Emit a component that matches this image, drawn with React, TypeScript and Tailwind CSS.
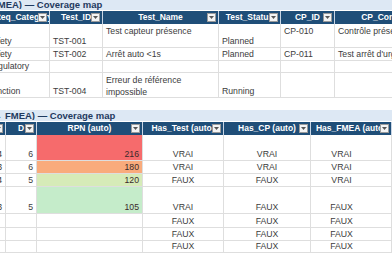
import React from "react";

const font = "font-['Liberation_Sans',Arial,sans-serif]";

function Drop() {
  return (
    <div className="absolute right-[2px] top-[2px] w-[9px] h-[9px] bg-[#f4f4f4] border border-[#9a9a9a] flex items-center justify-center">
      <svg width="5" height="3" viewBox="0 0 5 3">
        <path d="M0 0 L5 0 L2.5 3 Z" fill="#555" />
      </svg>
    </div>
  );
}

function H({ label, cls = "" }: { label: string; cls?: string }) {
  return (
    <div className={`relative h-full flex items-center justify-center overflow-hidden border-r border-[#c9d6e6] text-white font-bold text-[8.5px] whitespace-nowrap ${cls}`}>
      <span className="shrink-0">{label}</span>
      <Drop />
    </div>
  );
}

type Cell = { t?: React.ReactNode; a?: "l" | "r" | "c"; top?: boolean; bg?: string; cls?: string };

function C({ c }: { c: Cell }) {
  const align = c.a === "r" ? "justify-end pr-[3px]" : c.a === "c" ? "justify-center" : "justify-start pl-[3px]";
  return (
    <div
      className={`h-full flex ${c.top ? "items-start pt-[1px]" : "items-end pb-[0px]"} ${align} border-r border-b border-[#dedede] overflow-hidden whitespace-nowrap leading-[12px] ${c.bg ?? ""} ${c.cls ?? ""}`}
    >
      {c.t}
    </div>
  );
}

export default function App() {
  const topRows: { h: string; cells: Cell[] }[] = [
    {
      h: "h-[24px]",
      cells: [
        { t: "Safety" },
        { t: "TST-001" },
        { t: "Test capteur présence", top: true },
        { t: "Planned" },
        { t: "CP-010", top: true },
        { t: "Contrôle présence opérateur", top: true },
      ],
    },
    {
      h: "h-[13px]",
      cells: [
        { t: "Safety" },
        { t: "TST-002" },
        { t: "Arrêt auto <1s" },
        { t: "Planned" },
        { t: "CP-011" },
        { t: "Test arrêt d'urgence" },
      ],
    },
    { h: "h-[12px]", cells: [{ t: "Regulatory" }, {}, {}, {}, {}, {}] },
    {
      h: "h-[25px]",
      cells: [
        { t: "Function" },
        { t: "TST-004" },
        {
          t: (
            <span>
              Erreur de référence
              <br />
              impossible
            </span>
          ),
          top: true,
        },
        { t: "Running" },
        {},
        {},
      ],
    },
  ];

  const rpn = (v: string, bg: string): Cell => ({ t: v, a: "r", bg, cls: "text-[#3a2a2a]" });
  const b = (v: string): Cell => ({ t: v, a: "c" });
  const bf = (v: string): Cell => ({ t: v, a: "c", cls: "pr-[19px]" });

  const botRows: { h: string; cells: Cell[] }[] = [
    { h: "h-[26px]", cells: [{ t: "4", a: "r" }, { t: "6", a: "r" }, rpn("216", "bg-[#f66b6c]"), b("VRAI"), b("VRAI"), bf("VRAI")] },
    { h: "h-[13px]", cells: [{ t: "3", a: "r" }, { t: "6", a: "r" }, rpn("180", "bg-[#f9ab7c]"), b("VRAI"), b("VRAI"), bf("VRAI")] },
    { h: "h-[13px]", cells: [{ t: "4", a: "r" }, { t: "5", a: "r" }, rpn("120", "bg-[#d6ebb8]"), b("FAUX"), b("FAUX"), bf("VRAI")] },
    { h: "h-[27px]", cells: [{ t: "3", a: "r" }, { t: "5", a: "r" }, rpn("105", "bg-[#c5ecca]"), b("VRAI"), b("FAUX"), bf("FAUX")] },
    { h: "h-[14px]", cells: [{}, {}, {}, b("FAUX"), b("FAUX"), bf("FAUX")] },
    { h: "h-[13px]", cells: [{}, {}, {}, b("FAUX"), b("FAUX"), bf("FAUX")] },
    { h: "h-[12px]", cells: [{}, {}, {}, b("FAUX"), b("FAUX"), bf("FAUX")] },
  ];

  const topGrid = "grid grid-cols-[66px_53px_116px_62px_54px_100px]";
  const botGrid = "grid grid-cols-[30px_31px_106px_81px_87px_81px]";

  return (
    <div className={`w-[392px] h-[272px] overflow-hidden bg-white text-[8.7px] text-[#3c3c3c] ${font}`}>
      {/* top title */}
      <div className="h-[11px] bg-[#dde8f4] border-b border-white flex items-start text-[9.5px] font-bold text-[#1f3a5f] leading-[9px]">
        <div className="w-[22px] shrink-0 overflow-hidden flex justify-end">
          <span className="shrink-0 whitespace-nowrap">Traceability (Req → Test → CP → FMEA)</span>
        </div>
        <span className="whitespace-nowrap">&nbsp;— Coverage map</span>
      </div>
      {/* top table */}
      <div className="-ml-[16px] w-[451px]">
        <div className={`${topGrid} h-[13px] bg-[#1f4e78]`}>
          <H label="Req_Category" cls="pl-[14px]" />
          <H label="Test_ID" />
          <H label="Test_Name" />
          <H label="Test_Status" />
          <H label="CP_ID" />
          <H label="CP_Control" />
        </div>
        {topRows.map((r, i) => (
          <div key={i} className={`${topGrid} ${r.h}`}>
            {r.cells.map((c, j) => (
              <C key={j} c={c} />
            ))}
          </div>
        ))}
      </div>

      <div className="h-[12px]" />

      {/* bottom title */}
      <div className="h-[12px] bg-[#dde8f4] border-b border-white flex items-center text-[9.5px] font-bold text-[#1f3a5f] leading-[9px]">
        <div className="w-[35px] shrink-0 overflow-hidden flex justify-end">
          <span className="shrink-0 whitespace-nowrap">Traceability (Req → Test → CP → FMEA)</span>
        </div>
        <span className="whitespace-nowrap">&nbsp;— Coverage map</span>
      </div>
      <div className="-ml-[24px] w-[416px]">
        <div className={`${botGrid} h-[13px] bg-[#1f4e78]`}>
          <H label="O" />
          <H label="D" />
          <H label="RPN (auto)" />
          <H label="Has_Test (auto)" />
          <H label="Has_CP (auto)" />
          <H label="Has_FMEA (auto)" />
        </div>
        {botRows.map((r, i) => (
          <div key={i} className={`${botGrid} ${r.h}`}>
            {r.cells.map((c, j) => (
              <C key={j} c={c} />
            ))}
          </div>
        ))}
      </div>
    </div>
  );
}
